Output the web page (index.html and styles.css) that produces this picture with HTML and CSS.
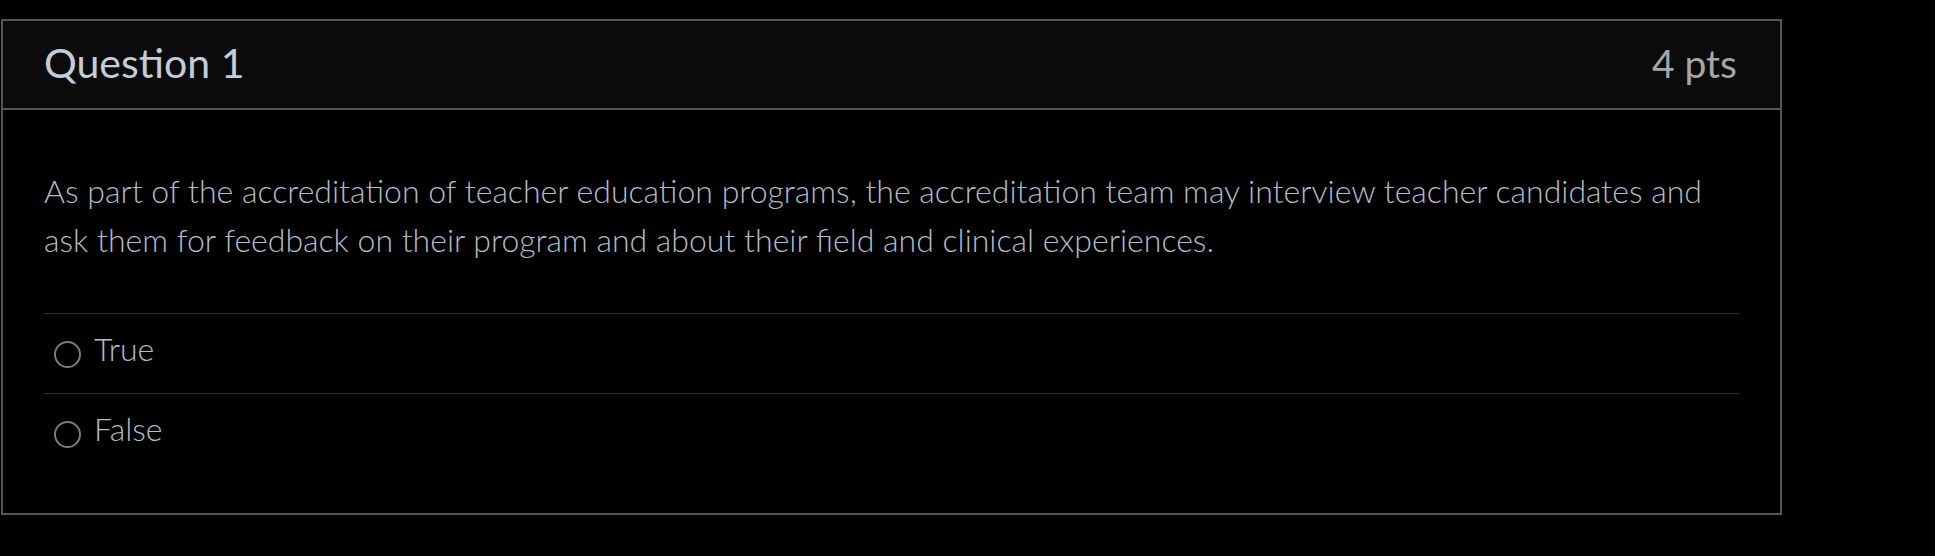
FILE: index.html
```html
<!DOCTYPE html>
<html lang="en">
<head>
    <meta charset="UTF-8">
    <title>Question 1</title>
    <link rel="stylesheet" href="styles.css">
</head>
<body>
    <div class="question">
        <div class="question-header">
            <h2 class="question-title">Question 1</h2>
            <span class="question-points">4 pts</span>
        </div>
        <div class="question-body">
            <p class="question-text">As part of the accreditation of teacher education programs, the accreditation team may interview teacher candidates and ask them for feedback on their program and about their field and clinical experiences.</p>
            <div class="answers">
                <label class="answer"><input type="radio" name="q1" value="true"> <span>True</span></label>
                <label class="answer"><input type="radio" name="q1" value="false"> <span>False</span></label>
            </div>
        </div>
    </div>
</body>
</html>
```

FILE: styles.css
```css
 body {
     margin: 0;
     padding: 19px 0 0 1px;
     background-color: #000;
     font-family: Lato, "Open Sans", sans-serif;
 }
 .question {
     width: 1781px;
     box-sizing: border-box;
     border: 2px solid #565656;
 }
 .question-header {
     display: flex;
     justify-content: space-between;
     align-items: baseline;
     height: 89px;
     padding: 19px 43px 0 41px;
     background-color: #0b0b0b;
     border-bottom: 2px solid #565656;
     box-sizing: border-box;
 }
 .question-title {
     margin: 0;
     font-size: 41px;
     font-weight: 400;
     line-height: 46px;
     color: #c2cdd7;
 }
 .question-points {
     font-size: 39px;
     line-height: 46px;
     color: #a6a6a6;
 }
 .question-body {
     padding: 56px 41px 40px 41px;
 }
 /* texte de la question et réponses en Lato Light */
 .question-text {
     margin: 0 0 49px 0;
     font-family: "Lato Light", Lato, sans-serif;
     font-size: 32px;
     font-weight: 300;
     line-height: 49px;
     color: #b3bcc5;
 }
 .answer {
     display: flex;
     align-items: flex-start;
     height: 80px;
     padding-top: 17px;
     border-top: 1px solid #2e2e2e;
     box-sizing: border-box;
     font-family: "Lato Light", Lato, sans-serif;
     font-size: 32px;
     font-weight: 300;
     line-height: 36px;
     color: #b3bcc5;
 }
 .answer input[type="radio"] {
     appearance: none;
     -webkit-appearance: none;
     width: 27px;
     height: 27px;
     margin: 10px 13px 0 10px;
     border: 2.5px solid #7c7c7c;
     border-radius: 50%;
     box-sizing: border-box;
 }
```
